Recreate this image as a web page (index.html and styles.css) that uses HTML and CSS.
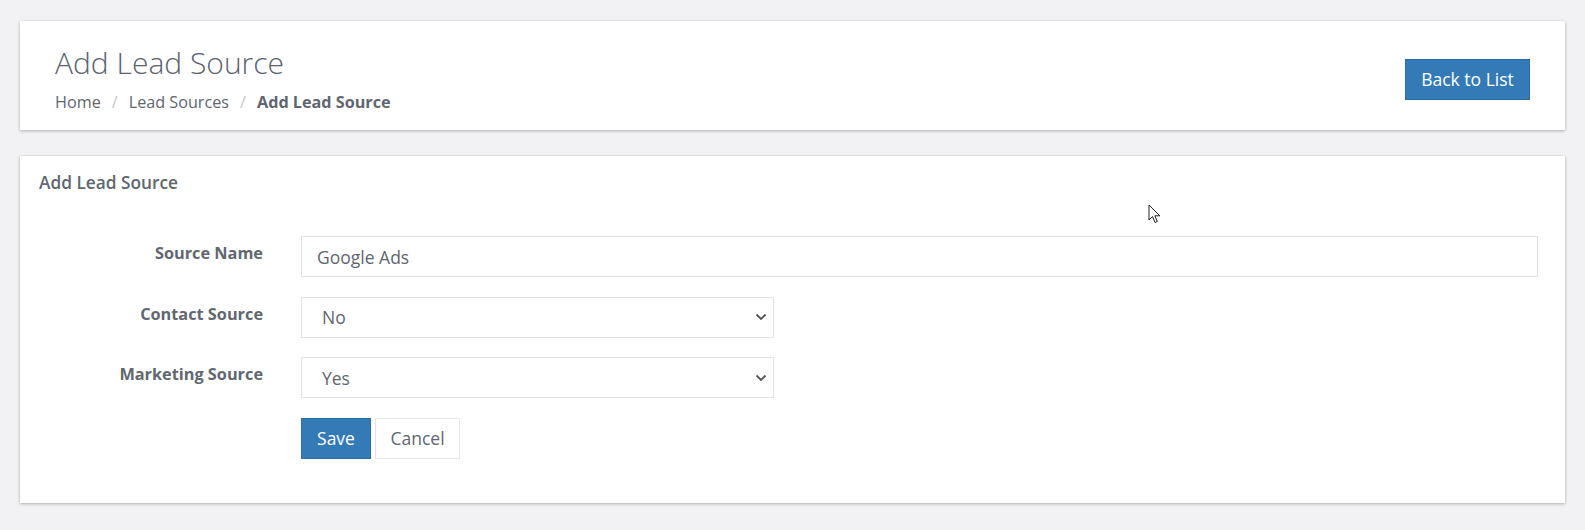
FILE: index.html
```html
<!DOCTYPE html>
<html lang="en">
<head>
<meta charset="utf-8">
<title>Add Lead Source</title>
<link rel="stylesheet" href="styles.css">
</head>
<body>
  <div class="page">
    <header class="card page-header">
      <div class="header-text">
        <h1 class="page-title">Add Lead Source</h1>
        <nav class="breadcrumb">
          <a class="crumb" href="#">Home</a>
          <span class="sep">/</span>
          <a class="crumb" href="#">Lead Sources</a>
          <span class="sep">/</span>
          <span class="crumb current">Add Lead Source</span>
        </nav>
      </div>
      <a class="btn btn-primary btn-back" href="#">Back to List</a>
    </header>

    <section class="card form-card">
      <h2 class="card-title">Add Lead Source</h2>
      <form class="form-grid">
        <label class="form-label" for="source-name">Source Name</label>
        <div class="form-field">
          <input id="source-name" class="form-control" type="text" value="Google Ads">
        </div>

        <label class="form-label" for="contact-source">Contact Source</label>
        <div class="form-field">
          <select id="contact-source" class="form-control form-select">
            <option>No</option>
            <option>Yes</option>
          </select>
        </div>

        <label class="form-label" for="marketing-source">Marketing Source</label>
        <div class="form-field">
          <select id="marketing-source" class="form-control form-select">
            <option selected>Yes</option>
            <option>No</option>
          </select>
        </div>

        <div class="form-spacer"></div>
        <div class="form-actions">
          <button type="button" class="btn btn-primary btn-save">Save</button>
          <button type="button" class="btn btn-default btn-cancel">Cancel</button>
        </div>
      </form>
      <svg class="cursor" width="14" height="20" viewBox="0 0 14 20" aria-hidden="true">
        <path d="M1 1 L1 16 L4.5 12.5 L7 18.5 L9.3 17.5 L6.9 11.8 L11.8 11.8 Z" fill="#fff" stroke="#222" stroke-width="1" stroke-linejoin="miter"/>
      </svg>
    </section>
  </div>
</body>
</html>
```

FILE: styles.css
```css
* {
  box-sizing: border-box;
}

html, body {
  margin: 0;
  padding: 0;
  background: #f2f2f4;
}

body {
  font-family: "Open Sans", "Liberation Sans", Arial, sans-serif;
  color: #5f6670;
}

.page {
  padding: 21px 20px 20px 20px;
  display: flex;
  flex-direction: column;
  gap: 26px;
}

.card {
  background: #ffffff;
  box-shadow: 0 1px 3px rgba(0, 0, 0, 0.28), 0 0 2px rgba(0, 0, 0, 0.04);
}

/* Header card */
.page-header {
  display: flex;
  align-items: center;
  justify-content: space-between;
  padding: 25px 35px 18px 35px;
  height: 109px;
}

.page-title {
  margin: 0;
  font-size: 30px;
  font-weight: 300;
  line-height: 33px;
  color: #5a6270;
}

.breadcrumb {
  margin-top: 13px;
  font-size: 16.2px;
  line-height: 20px;
  display: flex;
  align-items: baseline;
}

.crumb {
  color: #5f6670;
  text-decoration: none;
}

.crumb.current {
  font-weight: 700;
  color: #5f6670;
}

.sep {
  color: #c4c7cc;
  padding: 0 11px;
}

/* Buttons */
.btn {
  display: inline-flex;
  align-items: center;
  justify-content: center;
  height: 41px;
  font-family: "Open Sans", "Liberation Sans", Arial, sans-serif;
  font-size: 17.5px;
  text-decoration: none;
  border: 1px solid transparent;
  border-radius: 0;
  cursor: pointer;
}

.btn-primary {
  background: #337ab7;
  border-color: #2e6da4;
  color: #ffffff;
}

.btn-default {
  background: #ffffff;
  border-color: #e6e6e6;
  color: #5f6670;
}

.btn-back {
  width: 125px;
}

/* Form card */
.form-card {
  position: relative;
  padding: 17px 27px 44px 19px;
}

.card-title {
  margin: 0;
  font-size: 17.3px;
  font-weight: 600;
  line-height: 20px;
  color: #5f6670;
}

.form-grid {
  margin-top: 43px;
  display: grid;
  grid-template-columns: 224px 1fr;
  column-gap: 38px;
  row-gap: 19.5px;
}

.form-label {
  text-align: right;
  font-size: 16.3px;
  font-weight: 700;
  line-height: 20px;
  padding-top: 7px;
  color: #616770;
}

.form-control {
  display: block;
  width: 100%;
  height: 41px;
  padding: 0 15px;
  font-family: "Open Sans", "Liberation Sans", Arial, sans-serif;
  font-size: 17.5px;
  color: #5f6670;
  background: #ffffff;
  border: 1px solid #e3e3e3;
  border-radius: 0;
  outline: none;
}

.form-select {
  width: 473px;
  padding-left: 20px;
  appearance: none;
  -webkit-appearance: none;
  background-image: url("data:image/svg+xml;utf8,<svg xmlns='http://www.w3.org/2000/svg' width='12' height='8' viewBox='0 0 12 8'><path d='M1.5 1.5 L6 6 L10.5 1.5' fill='none' stroke='%23555' stroke-width='1.8'/></svg>");
  background-repeat: no-repeat;
  background-position: right 6px center;
  background-size: 12px 8px;
}

.form-actions {
  display: flex;
  gap: 4px;
}

.btn-save {
  width: 70px;
}

.btn-cancel {
  width: 85px;
}

.cursor {
  position: absolute;
  left: 1128px;
  top: 48px;
}
```
